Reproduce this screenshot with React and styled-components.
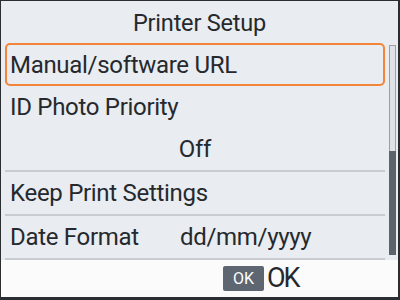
import React from "react";
import styled, { createGlobalStyle } from "styled-components";

const Global = createGlobalStyle`
  html, body { margin: 0; padding: 0; }
  body { font-family: Roboto, "Liberation Sans", sans-serif; }
`;

const Screen = styled.div`
  box-sizing: border-box;
  width: 400px;
  height: 300px;
  border-style: solid;
  border-color: #2b2e31;
  border-width: 1px 2px 3px 1px;
  display: flex;
  flex-direction: column;
  background: #e9ecf0;
  color: #25292d;
  overflow: hidden;
`;

const Header = styled.div`
  height: 42px;
  flex: none;
  display: flex;
  align-items: center;
  justify-content: center;
  font-size: 23.5px;
  letter-spacing: -0.2px;
  padding-top: 1px;
  box-sizing: border-box;
`;

const Body = styled.div`
  height: 217px;
  flex: none;
  display: flex;
  gap: 4px;
  padding: 0 2px 0 4px;
`;

const List = styled.div`
  flex: 1;
  display: flex;
  flex-direction: column;
`;

const Row = styled.div`
  box-sizing: border-box;
  height: ${(p) => (p.$selected ? 43 : 42)}px;
  flex: none;
  display: flex;
  align-items: center;
  justify-content: ${(p) => (p.$center ? "center" : "flex-start")};
  font-size: 24px;
  letter-spacing: -0.3px;
  padding-left: ${(p) => (p.$center ? 0 : p.$selected ? 3 : 5)}px;
  border: ${(p) => (p.$selected ? "2px solid #f2853a" : "none")};
  border-radius: ${(p) => (p.$selected ? 5 : 0)}px;
`;

const Separator = styled.div`
  height: 2px;
  flex: none;
  background: #c8cbd0;
`;

const Label = styled.span`
  width: 170px;
  flex: none;
`;

const Track = styled.div`
  width: 7px;
  flex: none;
  box-sizing: border-box;
  margin: 2px 0 5px;
  border: 1px solid #9aa0a7;
  background: #dfe2e6;
  display: flex;
  flex-direction: column;
  justify-content: flex-end;
`;

const Thumb = styled.div`
  height: 104px;
  background: #5b636c;
  margin: -1px;
`;

const Footer = styled.div`
  flex: 1;
  background: #fbfbfb;
  display: flex;
  align-items: center;
  padding-left: 222px;
  gap: 3px;
`;

const KeyBadge = styled.span`
  width: 41px;
  height: 25px;
  border-radius: 2px;
  background: #5e6771;
  color: #ffffff;
  font-size: 16px;
  display: flex;
  align-items: center;
  justify-content: center;
`;

const FooterText = styled.span`
  font-size: 27px;
  letter-spacing: -2px;
  line-height: 1;
`;

export default function App() {
  return (
    <>
      <Global />
      <Screen>
        <Header>Printer Setup</Header>
        <Body>
          <List>
            <Row $selected>Manual/software URL</Row>
            <Row>ID Photo Priority</Row>
            <Row $center>Off</Row>
            <Separator />
            <Row>Keep Print Settings</Row>
            <Separator />
            <Row>
              <Label>Date Format</Label>
              <span>dd/mm/yyyy</span>
            </Row>
            <Separator />
          </List>
          <Track>
            <Thumb />
          </Track>
        </Body>
        <Footer>
          <KeyBadge>OK</KeyBadge>
          <FooterText>OK</FooterText>
        </Footer>
      </Screen>
    </>
  );
}
